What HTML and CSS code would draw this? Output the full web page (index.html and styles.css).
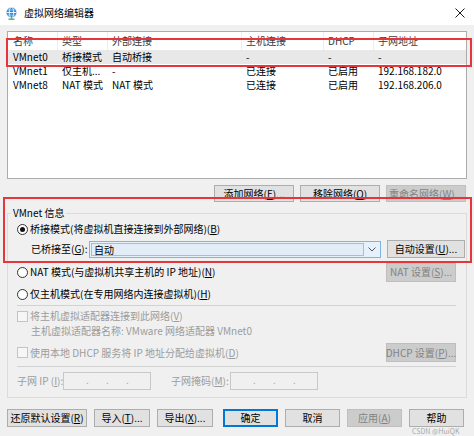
FILE: index.html
```html
<!DOCTYPE html>
<html lang="zh-CN">
<head>
<meta charset="utf-8">
<title>虚拟网络编辑器</title>
<link rel="stylesheet" href="styles.css">
</head>
<body>
<div class="titlebar">
  <svg class="app-icon" width="13" height="13" viewBox="0 0 13 13">
    <circle cx="6.5" cy="5.5" r="5" fill="#2f86d8"/>
    <ellipse cx="6.5" cy="5.5" rx="2.2" ry="5" fill="none" stroke="#ffffff" stroke-width="0.9"/>
    <line x1="1.5" y1="5.5" x2="11.5" y2="5.5" stroke="#ffffff" stroke-width="0.9"/>
    <path d="M2.5 3h8M2.5 8h8" stroke="#bfe0ff" stroke-width="0.7"/>
    <rect x="5.7" y="10.3" width="1.6" height="1.4" fill="#3b9d5a"/>
    <rect x="3.5" y="11.6" width="6" height="1.2" fill="#3b9d5a"/>
  </svg>
  <span class="title">虚拟网络编辑器</span>
  <svg class="close" width="10" height="10" viewBox="0 0 10 10">
    <path d="M0.5 0.5L9.5 9.5M9.5 0.5L0.5 9.5" stroke="#1a1a1a" stroke-width="1"/>
  </svg>
</div>

<div class="main">
  <div class="list">
    <div class="lrow head">
      <span class="c c1">名称</span><span class="c c2">类型</span><span class="c c3">外部连接</span><span class="c c4">主机连接</span><span class="c c5">DHCP</span><span class="c c6">子网地址</span>
    </div>
    <div class="lrow sel">
      <span class="c c1">VMnet0</span><span class="c c2">桥接模式</span><span class="c c3">自动桥接</span><span class="c c4">-</span><span class="c c5">-</span><span class="c c6">-</span>
    </div>
    <div class="lrow">
      <span class="c c1">VMnet1</span><span class="c c2">仅主机...</span><span class="c c3">-</span><span class="c c4">已连接</span><span class="c c5">已启用</span><span class="c c6">192.168.182.0</span>
    </div>
    <div class="lrow">
      <span class="c c1">VMnet8</span><span class="c c2">NAT 模式</span><span class="c c3">NAT 模式</span><span class="c c4">已连接</span><span class="c c5">已启用</span><span class="c c6">192.168.206.0</span>
    </div>
  </div>

  <div class="list-actions">
    <button class="btn w80">添加网络(<u>E</u>)...</button>
    <button class="btn w80">移除网络(<u>O</u>)</button>
    <button class="btn w80 disabled">重命名网络(<u>W</u>)...</button>
  </div>

  <fieldset class="group">
    <legend>VMnet 信息</legend>

    <div class="opt r-bridge">
      <span class="radio on"></span>
      <span class="opt-text">桥接模式(将虚拟机直接连接到外部网络)(<u>B</u>)</span>
    </div>

    <div class="bridge-row">
      <span class="bridge-label">已桥接至(<u>G</u>):</span>
      <div class="combo">
        <div class="combo-field">自动</div>
        <div class="combo-arrow">
          <svg width="8" height="5" viewBox="0 0 8 5"><path d="M0.5 0.5L4 4L7.5 0.5" fill="none" stroke="#555" stroke-width="1"/></svg>
        </div>
      </div>
      <button class="btn auto-btn">自动设置(<u>U</u>)...</button>
    </div>

    <div class="opt r-nat">
      <span class="radio"></span>
      <span class="opt-text">NAT 模式(与虚拟机共享主机的 IP 地址)(<u>N</u>)</span>
      <button class="btn side-btn disabled">NAT 设置(<u>S</u>)...</button>
    </div>

    <div class="opt r-host">
      <span class="radio"></span>
      <span class="opt-text">仅主机模式(在专用网络内连接虚拟机)(<u>H</u>)</span>
    </div>

    <div class="sep"></div>

    <div class="opt r-cb1 dim">
      <span class="check"></span>
      <span class="opt-text">将主机虚拟适配器连接到此网络(<u>V</u>)</span>
    </div>
    <div class="adapter dim">主机虚拟适配器名称: VMware 网络适配器 VMnet0</div>

    <div class="opt r-cb2 dim">
      <span class="check"></span>
      <span class="opt-text">使用本地 DHCP 服务将 IP 地址分配给虚拟机(<u>D</u>)</span>
      <button class="btn side-btn disabled">DHCP 设置(<u>P</u>)...</button>
    </div>

    <div class="sep sep2"></div>

    <div class="subnet-row dim">
      <span class="sub-label">子网 IP (<u>I</u>):</span>
      <div class="ip"><span>.</span><span>.</span><span>.</span></div>
      <span class="sub-label mask-label">子网掩码(<u>M</u>):</span>
      <div class="ip"><span>.</span><span>.</span><span>.</span></div>
    </div>
  </fieldset>

  <div class="footer">
    <button class="btn w80">还原默认设置(<u>R</u>)</button>
    <button class="btn w56">导入(<u>T</u>)...</button>
    <button class="btn w56">导出(<u>X</u>)...</button>
    <button class="btn w55 default ok">确定</button>
    <button class="btn w55">取消</button>
    <button class="btn w55 disabled">应用(<u>A</u>)</button>
    <button class="btn w55">帮助</button>
  </div>
</div>

<div class="mark mark-list"></div>
<div class="mark mark-info"></div>
<div class="watermark">CSDN @HuiQK</div>
</body>
</html>
```

FILE: styles.css
```css
* { box-sizing: border-box; }

html, body {
  margin: 0;
  padding: 0;
}

body {
  width: 474px;
  height: 436px;
  overflow: hidden;
  position: relative;
  background: #f0f0f0;
  color: #000;
  font-family: "Noto Sans CJK SC", "Noto Sans", sans-serif;
  font-size: 10px;
  line-height: 12px;
}

u { text-decoration: underline; text-underline-offset: 1px; }

/* title bar */
.titlebar {
  height: 25px;
  background: #ffffff;
  display: flex;
  align-items: center;
  padding-left: 5px;
}
.app-icon { display: block; flex: none; margin-top: 1px; }
.title { margin-left: 6px; font-size: 10px; color: #000; }
.close { margin-left: auto; margin-right: 9px; display: block; }

.main {
  padding: 0 7px;
}

/* list view */
.list {
  margin-top: 6px;
  height: 148px;
  background: #ffffff;
  border: 1px solid #acacac;
}
.lrow {
  display: flex;
  height: 14px;
  align-items: center;
  white-space: nowrap;
}
.lrow.head {
  height: 18px;
  color: #3c3c3c;
}
.lrow.head .c { height: 18px; line-height: 18px; }
.lrow.head .c + .c { border-left: 1px solid #ececec; padding-left: 4px; }
.lrow.sel { background: #e8e8e8; }
.c { display: block; padding-left: 5px; }
.c1 { width: 49px; }
.c2 { width: 50px; }
.c3 { width: 134px; }
.c4 { width: 82px; }
.c5 { width: 50px; }
.c6 { flex: 1; }

/* buttons */
.btn {
  font: inherit;
  line-height: 12px;
  height: 17px;
  padding: 0;
  margin: 0;
  border: 1px solid #adadad;
  background: #e1e1e1;
  color: #000;
  display: flex;
  align-items: center;
  justify-content: center;
  white-space: nowrap;
  flex: none;
}
.btn.disabled {
  background: #cccccc;
  border-color: #bfbfbf;
  color: #838383;
}
.btn.default {
  border: 1px solid #0078d7;
  box-shadow: inset 0 0 0 1px #0078d7;
}
.w80 { width: 80px; }
.w56 { width: 56px; }
.w55 { width: 55px; }

.list-actions {
  margin-top: 6px;
  display: flex;
  justify-content: flex-end;
  gap: 6px;
  padding-right: 1px;
}

/* group */
.group {
  margin: 4px 0 0 0;
  padding: 0 0 7px 0;
  min-width: 0;
  border: 1px solid #dcdcdc;
}
.group legend {
  margin-left: 3px;
  padding: 0 2px;
  line-height: 14px;
  height: 14px;
  font-size: 10px;
}

.opt {
  display: flex;
  align-items: center;
  padding-left: 9px;
  white-space: nowrap;
}
.opt-text { margin-left: 2px; }

.radio {
  width: 11px;
  height: 11px;
  border: 1px solid #333;
  border-radius: 50%;
  background: #fff;
  flex: none;
  display: flex;
  align-items: center;
  justify-content: center;
}
.radio.on::after {
  content: "";
  width: 5px;
  height: 5px;
  border-radius: 50%;
  background: #111;
}
.check {
  width: 11px;
  height: 11px;
  border: 1px solid #c4c4c4;
  background: #f6f6f6;
  flex: none;
}

.r-bridge { height: 18px; }

.bridge-row {
  margin-top: 2px;
  height: 18px;
  display: flex;
  align-items: center;
  padding-left: 23px;
}
.bridge-label { width: 58px; flex: none; white-space: nowrap; }
.combo {
  width: 292px;
  height: 17px;
  border: 1px solid #7fb2e5;
  background: #e5f1fb;
  display: flex;
  padding: 1px;
}
.combo-field {
  flex: 1;
  border: 1px solid #a7bed6;
  background: #e3edf7;
  padding-left: 2px;
  line-height: 11px;
  white-space: nowrap;
}
.combo-arrow {
  width: 15px;
  display: flex;
  align-items: center;
  justify-content: center;
}
.combo-arrow svg { display: block; }
.auto-btn { width: 78px; height: 18px; margin-left: 6px; }

.r-nat { margin-top: 4px; height: 20px; }
.side-btn { width: 70px; height: 19px; margin-left: auto; margin-right: 10px; }
.r-host { margin-top: 3px; height: 18px; }

.sep {
  margin: 2px 10px 0 9px;
  height: 1px;
  background: #d2d2d2;
}

.dim { color: #9c9c9c; }

.r-cb1 { margin-top: 1px; height: 18px; }
.adapter {
  height: 12px;
  padding-left: 23px;
  white-space: nowrap;
}
.r-cb2 { margin-top: 6px; height: 19px; }
.sep2 { margin-top: 4px; }

.subnet-row {
  margin-top: 5px;
  height: 18px;
  display: flex;
  align-items: center;
  padding-left: 9px;
  white-space: nowrap;
}
.sub-label { width: 46px; flex: none; }
.mask-label { width: 59px; margin-left: 20px; }
.ip {
  width: 88px;
  height: 18px;
  border: 1px solid #c8c8c8;
  background: #f0f0f0;
  display: flex;
  justify-content: center;
  gap: 18px;
  line-height: 14px;
  color: #a8a8a8;
}
.ip span { width: 2px; }

/* footer */
.footer {
  margin-top: 11px;
  display: flex;
  gap: 7px;
}
.footer .btn { height: 18px; }
.footer .ok { margin-left: 3px; }

/* annotation overlays */
.mark {
  position: absolute;
  border: 2px solid #e5363b;
  pointer-events: none;
}
.mark-list { left: 6px; top: 38px; width: 466px; height: 29px; }
.mark-info { left: 3px; top: 197px; width: 469px; height: 66px; }

.watermark {
  position: absolute;
  left: 412px;
  top: 427px;
  font-size: 7px;
  line-height: 8px;
  color: rgba(140, 140, 140, 0.75);
  white-space: nowrap;
}
```
